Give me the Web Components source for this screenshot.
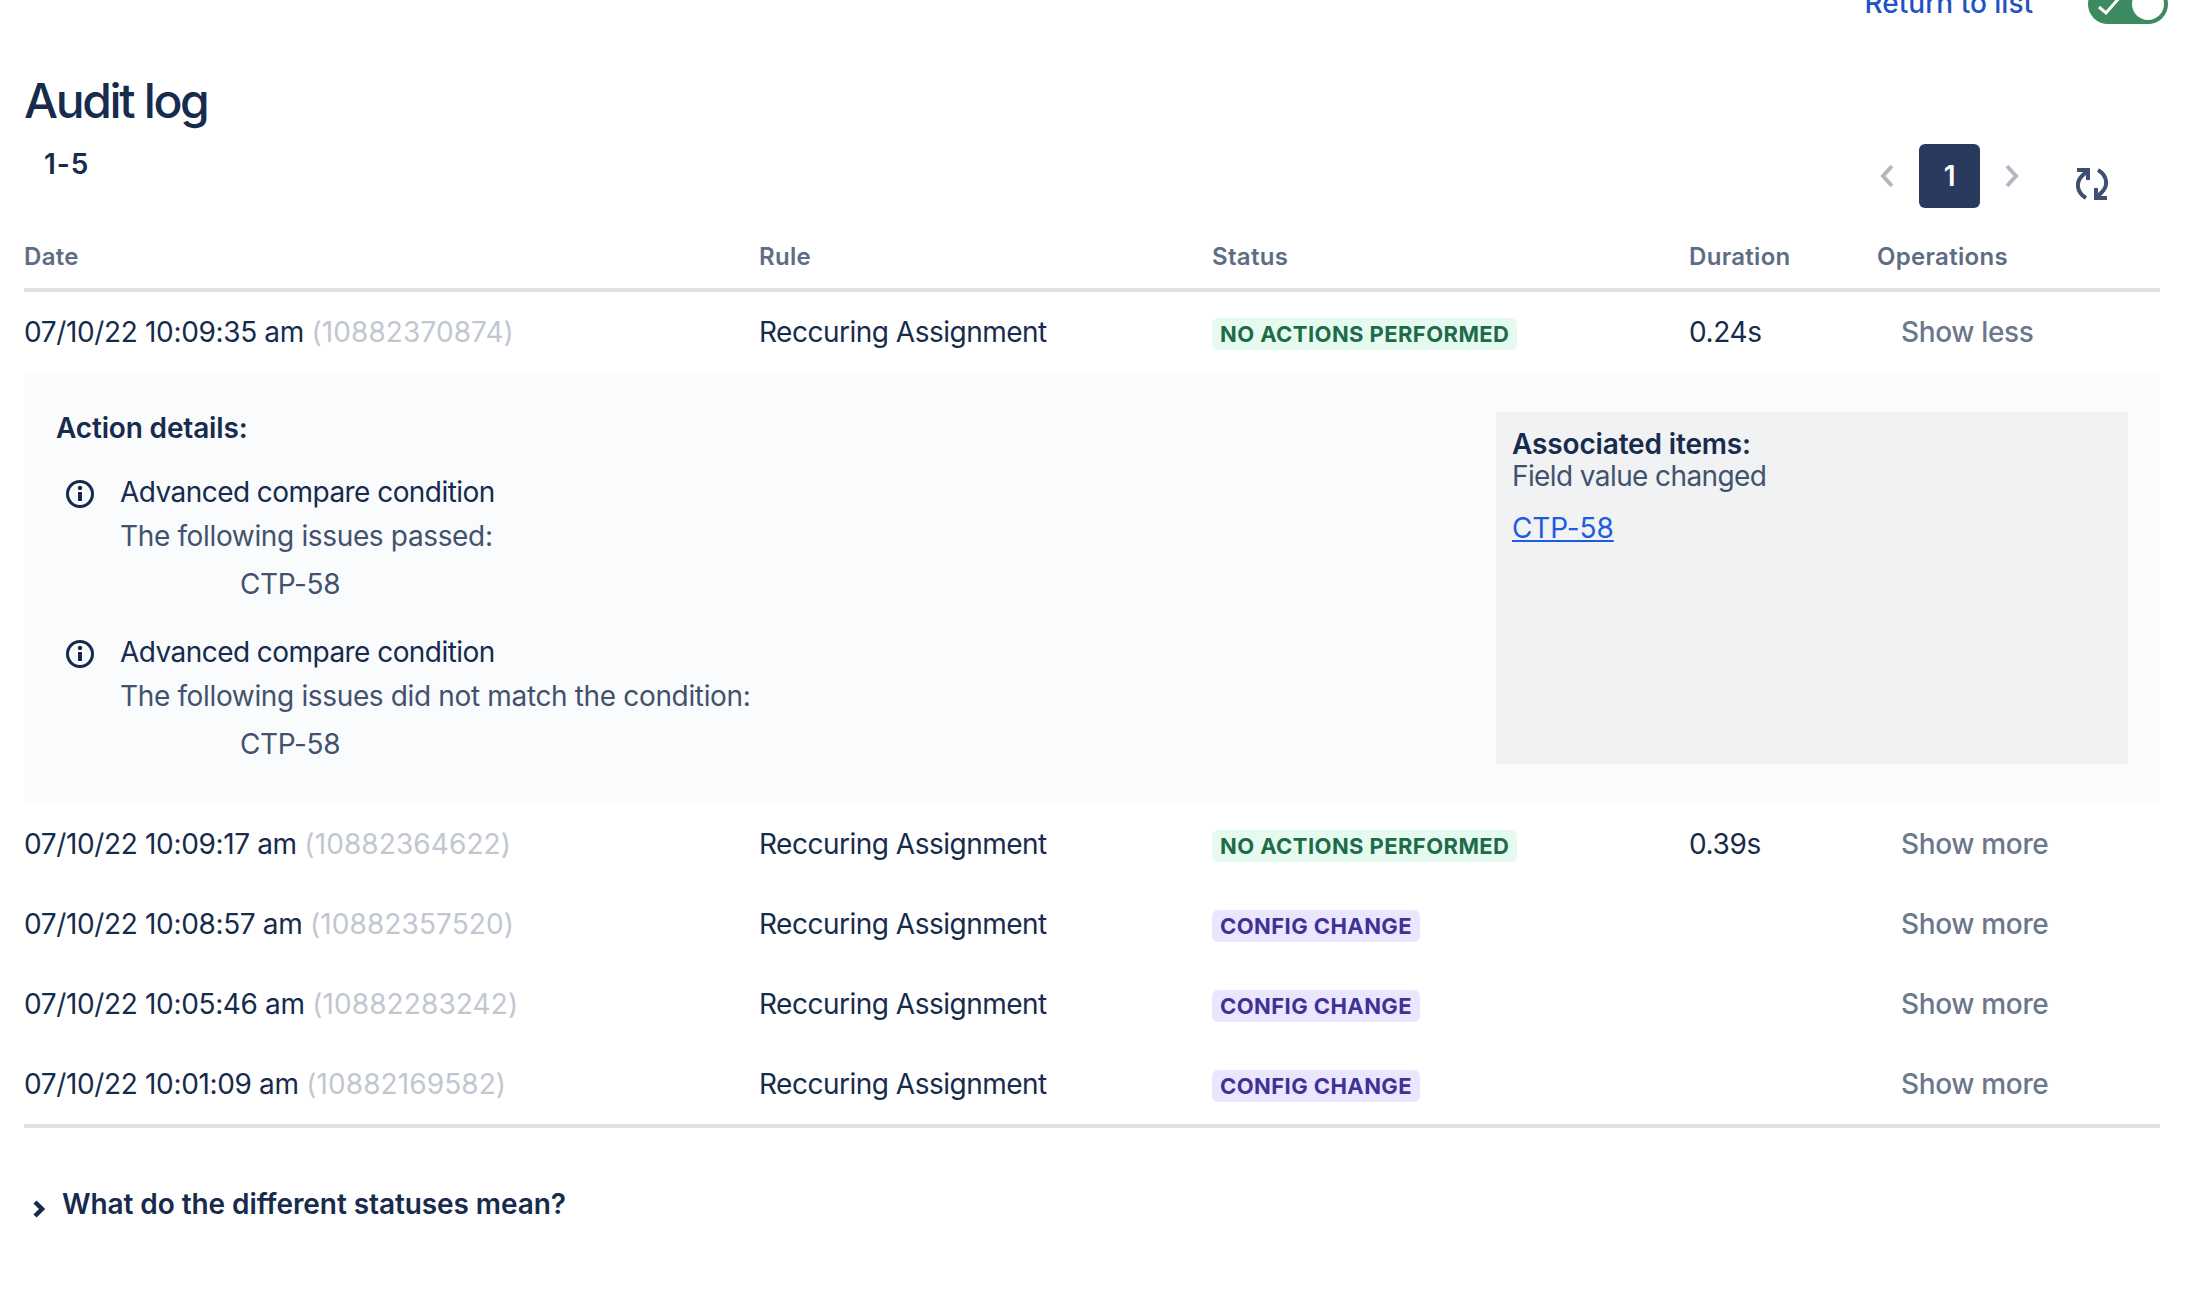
<!DOCTYPE html>
<html lang="en">
<head>
<meta charset="utf-8">
<title>Audit log</title>
<style>
  html, body { margin: 0; background: #fff; }
  body {
    font: 400 28px/40px Inter, "Liberation Sans", sans-serif;
    letter-spacing: -0.35px;
    color: #172b4d;
    overflow: hidden;
    height: 1300px;
  }
</style>
</head>
<body>
<audit-page>
  <top-bar></top-bar>
  <audit-heading title-text="Audit log" range="1-5"></audit-heading>
  <log-table>
    <log-row date="07/10/22 10:09:35 am" run="(10882370874)" rule="Reccuring Assignment" status="ok" duration="0.24s" action="Show less"></log-row>
    <action-details>
      <action-item slot="items" text="The following issues passed:" issue="CTP-58"></action-item>
      <action-item slot="items" text="The following issues did not match the condition:" issue="CTP-58"></action-item>
    </action-details>
    <log-row date="07/10/22 10:09:17 am" run="(10882364622)" rule="Reccuring Assignment" status="ok" duration="0.39s" action="Show more"></log-row>
    <log-row date="07/10/22 10:08:57 am" run="(10882357520)" rule="Reccuring Assignment" status="config" action="Show more"></log-row>
    <log-row date="07/10/22 10:05:46 am" run="(10882283242)" rule="Reccuring Assignment" status="config" action="Show more"></log-row>
    <log-row date="07/10/22 10:01:09 am" run="(10882169582)" rule="Reccuring Assignment" status="config" action="Show more"></log-row>
  </log-table>
  <status-help>What do the different statuses mean?</status-help>
</audit-page>

<script>
class AuditPage extends HTMLElement {
  constructor() {
    super();
    this.attachShadow({ mode: "open" });
  }
  connectedCallback() {
    this.shadowRoot.innerHTML = `
      <style>
        :host { display: block; padding: 0 48px 0 24px; margin-top: -16px; }
      </style>
      <slot></slot>`;
  }
}

class TopBar extends HTMLElement {
  constructor() {
    super();
    this.attachShadow({ mode: "open" });
  }
  connectedCallback() {
    this.shadowRoot.innerHTML = `
      <style>
        :host { display: flex; justify-content: flex-end; align-items: center; gap: 55px; height: 40px; margin-right: -8px; }
        a { color: #1f52c4; font-weight: 500; text-decoration: none; margin-top: -3px; letter-spacing: 0; }
        .toggle { position: relative; width: 80px; height: 40px; border-radius: 20px; background: #3b8a60; }
        .knob { position: absolute; right: 4px; top: 4px; width: 32px; height: 32px; border-radius: 50%; background: #fff; }
        svg { position: absolute; left: 10px; top: 8px; }
      </style>
      <a href="#">Return to list</a>
      <div class="toggle">
        <svg width="24" height="24" viewBox="0 0 24 24" fill="none" stroke="#fff" stroke-width="3"><path d="M1 15l7 6L22 5"/></svg>
        <div class="knob"></div>
      </div>`;
  }
}

class AuditHeading extends HTMLElement {
  constructor() {
    super();
    this.attachShadow({ mode: "open" });
  }
  connectedCallback() {
    const title = this.getAttribute("title-text") || "";
    const range = this.getAttribute("range") || "";
    this.shadowRoot.innerHTML = `
      <style>
        :host { display: block; }
        h1 { margin: 0; padding-top: 49px; font-size: 48px; line-height: 56px; font-weight: 500; letter-spacing: -2.35px; }
        .bar { display: flex; justify-content: space-between; margin-top: -8px; height: 119px; }
        .range { font-weight: 600; padding-left: 20px; margin-top: 23px; letter-spacing: 1px; }
        page-nav { margin-right: 52px; margin-top: 23px; }
      </style>
      <h1>${title}</h1>
      <div class="bar">
        <span class="range">${range}</span>
        <page-nav></page-nav>
      </div>`;
  }
}

class PageNav extends HTMLElement {
  constructor() {
    super();
    this.attachShadow({ mode: "open" });
  }
  connectedCallback() {
    const arc = `<path d="M26 16l-5 5c-6 6-6 16 4 22"/><path d="M16 15h11v10"/>`;
    this.shadowRoot.innerHTML = `
      <style>
        :host { display: flex; align-items: flex-start; }
        .arrow { display: block; margin-top: 19px; }
        .num {
          width: 61px; height: 64px; margin: 0 25px; border-radius: 6px; background: #2a3a5e; color: #fff;
          font-weight: 600; display: flex; align-items: center; justify-content: center;
        }
        .refresh { display: block; margin: 24px 0 0 57px; }
      </style>
      <svg class="arrow" width="14" height="26" viewBox="0 0 14 26" fill="none" stroke="#b3b9c4" stroke-width="4"><path d="M12 3L3 13l9 10"/></svg>
      <div class="num">1</div>
      <svg class="arrow" width="14" height="26" viewBox="0 0 14 26" fill="none" stroke="#b3b9c4" stroke-width="4"><path d="M2 3l9 10L2 23"/></svg>
      <svg class="refresh" width="32" height="32" viewBox="15 13 32 32" fill="none" stroke="#3f4f72" stroke-width="4">
        <g>${arc}</g>
        <g transform="rotate(180 31 29)">${arc}</g>
      </svg>`;
  }
}

class LogTable extends HTMLElement {
  constructor() {
    super();
    this.attachShadow({ mode: "open" });
  }
  connectedCallback() {
    this.shadowRoot.innerHTML = `
      <style>
        :host { display: block; border-bottom: 4px solid #dfe1e6; --cols: 735px 453px 477px 188px 283px; }
        .head {
          display: grid; grid-template-columns: var(--cols); height: 48px;
          border-bottom: 4px solid #dfe1e6; font-size: 24px; font-weight: 600; color: #5e6c84; line-height: 34px;
          letter-spacing: 0.3px;
        }
      </style>
      <div class="head">
        <span>Date</span><span>Rule</span><span>Status</span><span>Duration</span><span>Operations</span>
      </div>
      <slot></slot>`;
  }
}

class LogRow extends HTMLElement {
  constructor() {
    super();
    this.attachShadow({ mode: "open" });
  }
  connectedCallback() {
    const a = (n) => this.getAttribute(n) || "";
    const label = a("status") === "ok" ? "No actions performed" : "Config change";
    this.shadowRoot.innerHTML = `
      <style>
        :host { display: grid; grid-template-columns: var(--cols); height: 80px; align-items: center; }
        .run { color: #c1c7d0; letter-spacing: 0.1px; }
        .rule { letter-spacing: -0.5px; }
        .op { color: #6b778c; padding-left: 24px; font-weight: 500; }
      </style>
      <span>${a("date")} <span class="run">${a("run")}</span></span>
      <span class="rule">${a("rule")}</span>
      <span><status-lozenge kind="${a("status")}">${label}</status-lozenge></span>
      <span>${a("duration")}</span>
      <span class="op">${a("action")}</span>`;
  }
}

class StatusLozenge extends HTMLElement {
  constructor() {
    super();
    this.attachShadow({ mode: "open" });
  }
  connectedCallback() {
    this.shadowRoot.innerHTML = `
      <style>
        :host {
          display: inline-block; height: 32px; line-height: 32px; padding: 0 8px; margin-top: 6px; vertical-align: top;
          border-radius: 6px; font-size: 22px; font-weight: 700; text-transform: uppercase; letter-spacing: 0.42px;
          background: #e6fbef; color: #1d6b49;
        }
        :host([kind="config"]) { background: #eae6ff; color: #403294; }
      </style>
      <slot></slot>`;
  }
}

class ActionDetails extends HTMLElement {
  constructor() {
    super();
    this.attachShadow({ mode: "open" });
  }
  connectedCallback() {
    this.shadowRoot.innerHTML = `
      <style>
        :host { display: flex; justify-content: space-between; padding: 36px 32px 40px; background: #fafbfc; }
        h4 { margin: 0 0 24px; font-size: 28px; line-height: 40px; font-weight: 600; letter-spacing: -0.16px; }
        aside { width: 632px; box-sizing: border-box; margin-top: 4px; padding: 16px; background: #f1f2f4; line-height: 33px; }
        aside b { display: block; font-weight: 600; letter-spacing: -0.15px; line-height: 32px; }
        aside span { display: block; color: #42526e; letter-spacing: -0.6px; }
        aside a { display: inline-block; margin-top: 19px; color: #1d5be0; letter-spacing: -0.1px; }
      </style>
      <div>
        <h4>Action details:</h4>
        <slot name="items"></slot>
      </div>
      <aside>
        <b>Associated items:</b>
        <span>Field value changed</span>
        <a href="#">CTP-58</a>
      </aside>`;
  }
}

class ActionItem extends HTMLElement {
  constructor() {
    super();
    this.attachShadow({ mode: "open" });
  }
  connectedCallback() {
    const text = this.getAttribute("text") || "";
    const issue = this.getAttribute("issue") || "";
    this.shadowRoot.innerHTML = `
      <style>
        :host { display: grid; grid-template-columns: 55px auto; margin-bottom: 28px; padding-left: 9px; color: #42526e; }
        :host(:last-child) { margin-bottom: 0; }
        svg { display: block; margin-top: 7px; }
        .name { color: #172b4d; letter-spacing: -0.55px; }
        .text { margin-top: 4px; }
        .issue { margin-top: 8px; padding-left: 120px; }
      </style>
      <svg width="30" height="30" viewBox="0 0 30 30" fill="none" stroke="#172b4d" stroke-width="3">
        <circle cx="15" cy="15" r="12.5"/>
        <circle cx="15" cy="9" r="2.2" fill="#172b4d" stroke="none"/>
        <path d="M15 13v9" stroke-width="4"/>
      </svg>
      <div>
        <div class="name">Advanced compare condition</div>
        <div class="text">${text}</div>
        <div class="issue">${issue}</div>
      </div>`;
  }
}

class StatusHelp extends HTMLElement {
  constructor() {
    super();
    this.attachShadow({ mode: "open" });
  }
  connectedCallback() {
    this.shadowRoot.innerHTML = `
      <style>
        :host { display: flex; margin-top: 56px; font-weight: 600; padding-left: 9px; letter-spacing: -0.08px; }
        svg { display: block; margin: 16px 17px 0 0; }
      </style>
      <svg width="12" height="18" viewBox="0 0 12 18" fill="none" stroke="#172b4d" stroke-width="4.5"><path d="M2 2l7 7-7 7"/></svg>
      <slot></slot>`;
  }
}

customElements.define("audit-page", AuditPage);
customElements.define("top-bar", TopBar);
customElements.define("audit-heading", AuditHeading);
customElements.define("page-nav", PageNav);
customElements.define("log-table", LogTable);
customElements.define("log-row", LogRow);
customElements.define("status-lozenge", StatusLozenge);
customElements.define("action-details", ActionDetails);
customElements.define("action-item", ActionItem);
customElements.define("status-help", StatusHelp);
</script>
</body>
</html>
